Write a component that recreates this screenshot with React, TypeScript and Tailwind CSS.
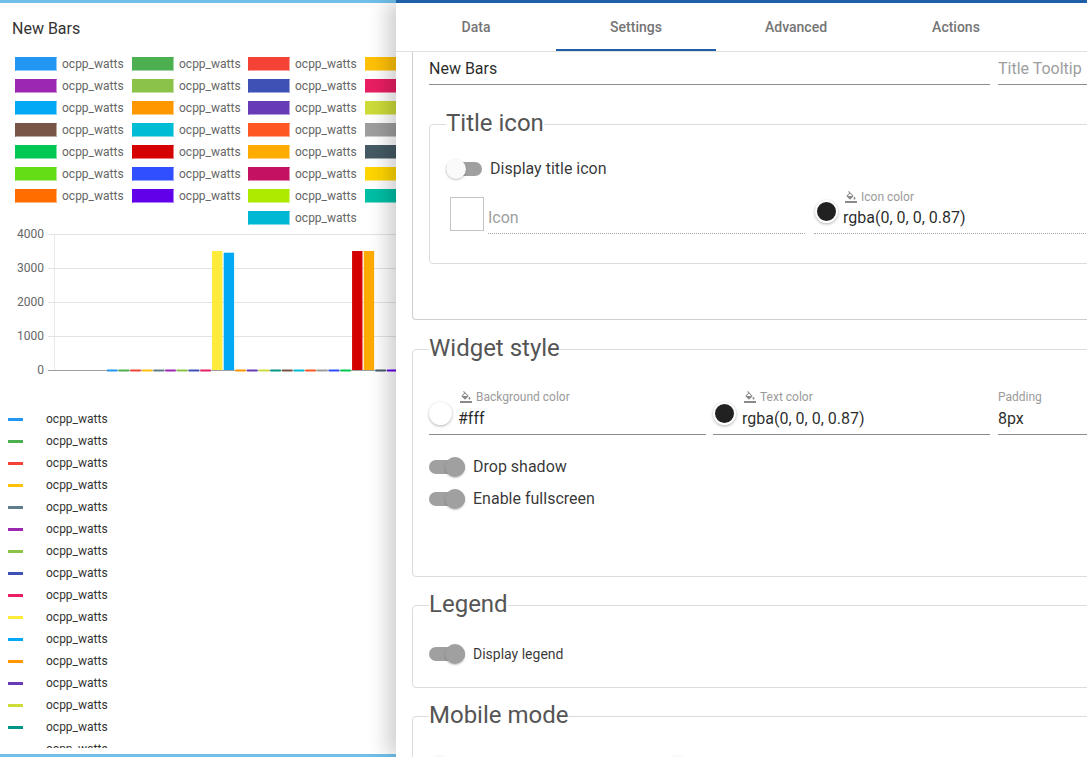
import React from "react";

const swatches = [
  "#2196f3", "#4caf50", "#f44336", "#ffc107",
  "#9c27b0", "#8bc34a", "#3f51b5", "#e91e63",
  "#03a9f4", "#ff9800", "#673ab7", "#cddc39",
  "#795548", "#00bcd4", "#ff5722", "#9e9e9e",
  "#00c853", "#d50000", "#ffab00", "#455a64",
  "#64dd17", "#304ffe", "#c51162", "#ffd600",
  "#ff6d00", "#6200ea", "#aeea00", "#00bfa5",
];

const series = [
  "#2196f3", "#4caf50", "#f44336", "#ffc107", "#607d8b", "#9c27b0", "#8bc34a", "#3f51b5",
  "#e91e63", "#ffeb3b", "#03a9f4", "#ff9800", "#673ab7", "#cddc39", "#009688", "#795548",
  "#00bcd4", "#ff5722", "#9e9e9e", "#304ffe", "#00c853", "#d50000", "#ffab00", "#455a64",
  "#6200ea",
];

const bigBars: Record<number, number> = { 9: 3500, 10: 3450, 21: 3500, 22: 3500 };

const Swatch = ({ color }: { color: string }) => (
  <div className="flex h-[22px] items-center">
    <div
      className="h-[14px] w-[42px] border bg-clip-padding"
      style={{
        backgroundColor: color,
        borderColor: color,
        borderRightColor: color + "80",
        borderBottomColor: color + "80",
      }}
    />
    <span className="ml-[5px] text-xs whitespace-nowrap text-[#666]">ocpp_watts</span>
  </div>
);

const Chart = () => (
  <svg className="block" width="396" height="150" viewBox="0 229 396 150">
    <line x1="54.5" x2="54.5" y1="234" y2="370" stroke="#eaeaea" />
    {[
      ["4000", 234],
      ["3000", 268],
      ["2000", 302],
      ["1000", 336],
      ["0", 370],
    ].map(([label, y]) => (
      <g key={label}>
        <line x1="48" x2="396" y1={Number(y) + 0.5} y2={Number(y) + 0.5} stroke={label === "0" ? "#9e9e9e" : "#e3e3e3"} />
        <text x="44" y={Number(y) + 4} textAnchor="end" fontSize="12" fill="#666">
          {label}
        </text>
      </g>
    ))}
    {series.map((color, i) => {
      const h = bigBars[i] ? (bigBars[i] / 4000) * 136 : 2;
      return <rect key={i} x={107 + i * 11.67} y={bigBars[i] ? 370 - h : 369.5} width="10.4" height={bigBars[i] ? h : 2} fill={color} />;
    })}
  </svg>
);

const Toggle = ({ on, label, small }: { on?: boolean; label?: string; small?: boolean }) => (
  <div className="flex h-5 items-center">
    <div className={`flex h-[14px] w-9 items-center rounded-full bg-[#a0a0a0] ${on ? "justify-end" : "justify-start"}`}>
      <div
        className={`h-5 w-5 shrink-0 rounded-full shadow-[0_1px_2px_rgba(0,0,0,0.25)] ${on ? "bg-[#a0a0a0]" : "bg-[#fafafa]"}`}
      />
    </div>
    {label && <span className={`ml-2 text-black/80 ${small ? "text-sm" : "text-base"}`}>{label}</span>}
  </div>
);

const FillIcon = () => (
  <svg width="12" height="12" viewBox="0 0 24 24" fill="#8a8a8a">
    <path d="M16.56 8.94L7.62 0 6.21 1.41l2.38 2.38-5.15 5.15c-.59.59-.59 1.54 0 2.12l5.5 5.5c.29.29.68.44 1.06.44s.77-.15 1.06-.44l5.5-5.5c.59-.58.59-1.53 0-2.12zM5.21 10L10 5.21 14.79 10H5.21zM19 11.5s-2 2.17-2 3.5c0 1.1.9 2 2 2s2-.9 2-2c0-1.33-2-3.5-2-3.5z" />
    <path d="M0 20h24v4H0z" />
  </svg>
);

const ColorField = ({
  label,
  value,
  color,
  className,
  compact,
}: {
  label: string;
  value: string;
  color: string;
  className: string;
  compact?: boolean;
}) => (
  <div className={`flex ${compact ? "h-[44px]" : "h-[46px]"} ${className}`}>
    <div
      className={`shrink-0 rounded-full border-2 border-white shadow-[0_1px_3px_rgba(0,0,0,0.3)] ${
        compact ? "mt-[11px] ml-[1px] h-[23px] w-[23px]" : "mt-[13px] h-[23px] w-[23px]"
      }`}
      style={{ backgroundColor: color }}
    />
    <div className={`flex flex-col ${compact ? "ml-[5px]" : "ml-[6px]"}`}>
      <div className="flex h-[15px] items-center gap-1 pl-[2px] text-xs text-[#9a9a9a]">
        <FillIcon />
        <span>{label}</span>
      </div>
      <div className={`text-base leading-6 text-black/85 ${compact ? "mt-[2px]" : "mt-[3px]"}`}>{value}</div>
    </div>
  </div>
);

const Section = ({ title, height, children }: { title: string; height: string; children: React.ReactNode }) => (
  <fieldset className={`w-[800px] rounded border border-[#dcdcdc] px-4 ${height}`}>
    <legend className="pb-[2px] text-2xl leading-[26px] text-[#555]">{title}</legend>
    {children}
  </fieldset>
);

export default function App() {
  return (
    <div className="flex h-[757px] w-[1087px] overflow-hidden bg-white font-[family-name:Roboto,sans-serif]">
      {/* dashboard preview */}
      <div className="flex w-[396px] shrink-0 flex-col overflow-hidden">
        <div className="h-[3px] bg-[#6fbfe9]" />
        <div className="mt-[14px] h-6 pl-3 text-base leading-6 text-[#333]">New Bars</div>
        <div className="mt-3 grid w-[480px] grid-cols-[117px_116px_117px_117px] pl-[15px]">
          {swatches.map((c, i) => (
            <Swatch key={i} color={c} />
          ))}
          <div className="col-start-3">
            <Swatch color="#00b8d4" />
          </div>
        </div>
        <Chart />
        <div className="mt-[29px] h-[340px] overflow-hidden">
          {series.slice(0, 16).map((c, i) => (
            <div key={i} className="flex h-[22px] items-center pl-2">
              <div className="h-[3px] w-[15px]" style={{ backgroundColor: c }} />
              <span className="ml-[23px] text-xs text-[#333]">ocpp_watts</span>
            </div>
          ))}
        </div>
        <div className="mt-auto h-[3px] bg-[#6fbfe9]" />
      </div>

      {/* settings drawer */}
      <div className="z-10 flex flex-1 flex-col overflow-hidden bg-white shadow-[-8px_0_20px_rgba(0,0,0,0.2)]">
        <div className="h-[3px] shrink-0 bg-[#1f5fa8]" />
        <div className="flex h-[49px] shrink-0 border-b border-[#e0e0e0]">
          {["Data", "Settings", "Advanced", "Actions"].map((t) => (
            <div
              key={t}
              className={`flex h-[48px] w-40 items-center justify-center border-b-2 pt-[2px] text-sm font-medium text-[#757575] ${
                t === "Settings" ? "border-[#1f5fa8]" : "border-transparent"
              }`}
            >
              {t}
            </div>
          ))}
        </div>

        <div className="w-[820px] overflow-hidden pl-4">
          <div className="h-[268px] rounded-b border-b border-l border-[#cfcfcf] pl-4">
            <div className="flex gap-2 pt-[4px]">
              <div className="h-[29px] w-[561px] border-b border-[#8c8c8c] pt-[1px] text-base leading-6 text-black/85">New Bars</div>
              <div className="h-[29px] w-[200px] border-b border-[#8c8c8c] pt-[1px] text-base leading-6 text-[#9e9e9e]">Title Tooltip</div>
            </div>
            <div className="mt-[25px]">
              <Section title="Title icon" height="h-[154px]">
                <div className="mt-[21px]">
                  <Toggle label="Display title icon" />
                </div>
                <div className="mt-[10px] flex pl-1">
                  <div className="mt-2 h-[34px] w-[34px] shrink-0 border border-[#c4c4c4]" />
                  <div className="ml-1 h-[45px] w-[317px] border-b border-dotted border-[#a8a8a8] pt-[17px] text-base leading-6 text-[#9e9e9e]">
                    Icon
                  </div>
                  <div className="ml-[9px] h-[45px] w-[300px] border-b border-dotted border-[#a8a8a8]">
                    <ColorField compact label="Icon color" value="rgba(0, 0, 0, 0.87)" color="#212121" className="" />
                  </div>
                </div>
              </Section>
            </div>
          </div>

          <div className="mt-[15px]">
            <Section title="Widget style" height="h-[242px]">
              <div className="mt-[26px] flex">
                <ColorField label="Background color" value="#fff" color="#ffffff" className="w-[277px] border-b border-[#8c8c8c]" />
                <ColorField label="Text color" value="rgba(0, 0, 0, 0.87)" color="#212121" className="ml-[7px] w-[277px] border-b border-[#8c8c8c]" />
                <div className="ml-2 h-[46px] w-[200px] border-b border-[#8c8c8c] pt-[1px]">
                  <div className="h-[15px] text-xs leading-[15px] text-[#9a9a9a]">Padding</div>
                  <div className="mt-[2px] text-base leading-6 text-black/85">8px</div>
                </div>
              </div>
              <div className="mt-[22px] flex flex-col gap-3">
                <Toggle on label="Drop shadow" />
                <Toggle on label="Enable fullscreen" />
              </div>
            </Section>
          </div>

          <div className="mt-[14px]">
            <Section title="Legend" height="h-[97px]">
              <div className="mt-[25px]">
                <Toggle on small label="Display legend" />
              </div>
            </Section>
          </div>

          <div className="mt-[14px]">
            <Section title="Mobile mode" height="h-[120px]">
              <div className="mt-[25px] flex gap-[202px]">
                <Toggle />
                <Toggle />
              </div>
            </Section>
          </div>
        </div>
      </div>
    </div>
  );
}
